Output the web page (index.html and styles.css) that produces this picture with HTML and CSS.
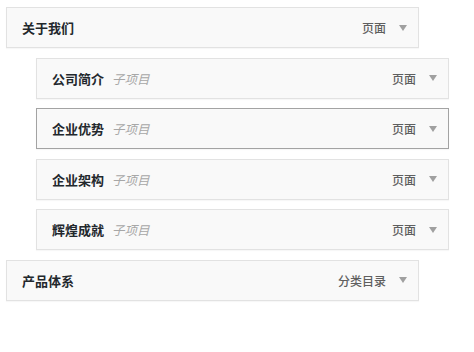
FILE: index.html
```html
<!DOCTYPE html>
<html lang="zh-CN">
<head>
<meta charset="utf-8">
<link rel="stylesheet" href="styles.css">
</head>
<body>
<ul class="menu">
  <li class="item">
    <div class="bar">
      <span class="title">关于我们</span>
      <span class="controls"><span class="type">页面</span><span class="arrow"></span></span>
    </div>
  </li>
  <li class="item depth-1">
    <div class="bar">
      <span class="title">公司简介</span><span class="sub">子项目</span>
      <span class="controls"><span class="type">页面</span><span class="arrow"></span></span>
    </div>
  </li>
  <li class="item depth-1">
    <div class="bar active">
      <span class="title">企业优势</span><span class="sub">子项目</span>
      <span class="controls"><span class="type">页面</span><span class="arrow"></span></span>
    </div>
  </li>
  <li class="item depth-1">
    <div class="bar">
      <span class="title">企业架构</span><span class="sub">子项目</span>
      <span class="controls"><span class="type">页面</span><span class="arrow"></span></span>
    </div>
  </li>
  <li class="item depth-1">
    <div class="bar">
      <span class="title">辉煌成就</span><span class="sub">子项目</span>
      <span class="controls"><span class="type">页面</span><span class="arrow"></span></span>
    </div>
  </li>
  <li class="item">
    <div class="bar">
      <span class="title">产品体系</span>
      <span class="controls"><span class="type">分类目录</span><span class="arrow"></span></span>
    </div>
  </li>
</ul>
</body>
</html>
```
FILE: styles.css
```css
html, body {
  margin: 0;
  padding: 0;
  background: #ffffff;
}
body {
  font-family: "Noto Sans CJK SC", "Noto Sans", sans-serif;
  width: 474px;
  height: 352px;
  overflow: hidden;
}
.menu {
  list-style: none;
  margin: 0;
  padding: 7px 0 0 6px;
  display: flex;
  flex-direction: column;
  gap: 9.6px;
}
.item {
  margin: 0;
}
.depth-1 {
  margin-left: 30px;
}
.bar {
  box-sizing: border-box;
  width: 413px;
  height: 41px;
  display: flex;
  align-items: center;
  padding: 0 11px 0 15px;
  background: #f9f9f9;
  border: 1px solid #e2e2e2;
  box-shadow: 0 1px 1px rgba(0,0,0,0.03);
}
.bar.active {
  border-color: #a3a3a3;
}
.title {
  font-size: 13px;
  font-weight: 700;
  color: #23282d;
}
.sub {
  margin-left: 8px;
  font-size: 12.5px;
  font-style: italic;
  color: #a7a7a7;
}
.controls {
  margin-left: auto;
  display: flex;
  align-items: center;
}
.type {
  font-size: 12px;
  font-weight: 500;
  color: #5f5f5f;
}
.arrow {
  width: 0;
  height: 0;
  margin-left: 13px;
  border-left: 4px solid transparent;
  border-right: 4px solid transparent;
  border-top: 6px solid #a0a0a0;
}
```
